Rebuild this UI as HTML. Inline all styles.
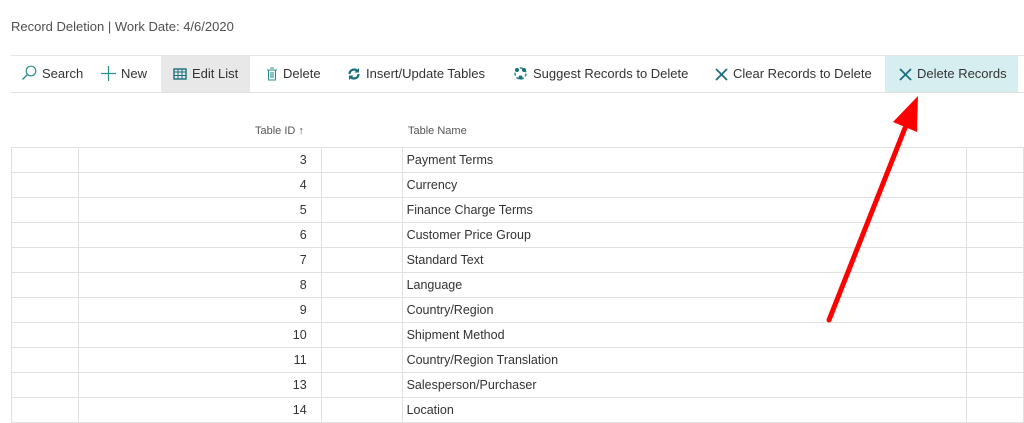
<!DOCTYPE html>
<html><head><style>
body{margin:0;width:1024px;height:407px;overflow:hidden;background:#fff;font-family:"Liberation Sans",sans-serif;position:relative;color:#333}
.t{position:absolute;left:11px;top:19px;font-size:13px;color:#505050}
.bar{position:absolute;left:11px;top:55px;width:1013px;height:36px;border-top:1px solid #e6e6e6;border-bottom:1px solid #e1e1e1}
.b{position:absolute;top:0;height:36px;line-height:36px;font-size:13px;color:#333;white-space:nowrap}
.b svg{vertical-align:-3px;margin-right:5px}
.hd{position:absolute;top:125px;font-size:11px;color:#555}
table{position:absolute;left:11px;top:147px;border-collapse:collapse;font-size:12.5px;color:#333}
td{border:1px solid #e1e1e1;height:24px;padding:0 4px}
td.n{text-align:right;padding-right:14px}
</style></head><body>
<div class="t">Record Deletion | Work Date: 4/6/2020</div>
<div class="bar">
<div class="b" style="left:150px;width:89px;background:#e8e8e8"></div>
<div class="b" style="left:874px;width:133px;background:#d7eef1"></div>
<div class="b" style="left:10px"><svg width="16" height="16" viewBox="0 0 16 16"><circle cx="10" cy="6" r="4.8" fill="none" stroke="#2a8f8f" stroke-width="1.2"/><path d="M6.5 9.5L1.5 14.5" stroke="#2a8f8f" stroke-width="1.4"/></svg>Search</div>
<div class="b" style="left:90px"><svg width="15" height="15"><path d="M7.5 0v15M0 7.5h15" stroke="#2a8f8f" stroke-width="1.2"/></svg>New</div>
<div class="b" style="left:162px"><svg width="14" height="14"><rect x="1" y="2" width="12" height="10" fill="none" stroke="#1b6f7d" stroke-width="1.4"/><path d="M1 5h12M1 8.5h12M5 2v10M9 2v10" stroke="#1b6f7d"/></svg>Edit List</div>
<div class="b" style="left:255px"><svg width="12" height="14"><path d="M1 3h10M4 1h4M2.5 3v10h7V3M5 5v6M7 5v6" fill="none" stroke="#2a8f8f" stroke-width="1.1"/></svg>Delete</div>
<div class="b" style="left:336px"><svg width="14" height="14"><path d="M2.5 7a4.5 4.5 0 0 1 8-2.8M11.5 7a4.5 4.5 0 0 1-8 2.8" fill="none" stroke="#1b6f7d" stroke-width="2.2"/><path d="M12 1v4.5H7.5zM2 13V8.5h4.5z" fill="#1b6f7d"/></svg>Insert/Update Tables</div>
<div class="b" style="left:502px"><svg width="15" height="15"><circle cx="7.5" cy="7.5" r="5.5" fill="none" stroke="#2a8f8f" stroke-width="1.5" stroke-dasharray="3 2"/><circle cx="4" cy="4" r="2" fill="#1b6f7d"/><circle cx="11" cy="4" r="2" fill="#1b6f7d"/><circle cx="7.5" cy="11.5" r="2" fill="#1b6f7d"/></svg>Suggest Records to Delete</div>
<div class="b" style="left:704px"><svg width="13" height="13"><path d="M1 1l11 11M12 1L1 12" stroke="#1b6f7d" stroke-width="1.8"/></svg>Clear Records to Delete</div>
<div class="b" style="left:888px"><svg width="13" height="13"><path d="M1 1l11 11M12 1L1 12" stroke="#1b6f7d" stroke-width="1.8"/></svg>Delete Records</div>
</div>
<div class="hd" style="left:255px">Table ID ↑</div>
<div class="hd" style="left:408px">Table Name</div>
<table>
<colgroup><col style="width:67px"><col style="width:243px"><col style="width:81px"><col style="width:565px"><col style="width:57px"></colgroup>
<tr><td></td><td class="n">3</td><td></td><td>Payment Terms</td><td></td></tr>
<tr><td></td><td class="n">4</td><td></td><td>Currency</td><td></td></tr>
<tr><td></td><td class="n">5</td><td></td><td>Finance Charge Terms</td><td></td></tr>
<tr><td></td><td class="n">6</td><td></td><td>Customer Price Group</td><td></td></tr>
<tr><td></td><td class="n">7</td><td></td><td>Standard Text</td><td></td></tr>
<tr><td></td><td class="n">8</td><td></td><td>Language</td><td></td></tr>
<tr><td></td><td class="n">9</td><td></td><td>Country/Region</td><td></td></tr>
<tr><td></td><td class="n">10</td><td></td><td>Shipment Method</td><td></td></tr>
<tr><td></td><td class="n">11</td><td></td><td>Country/Region Translation</td><td></td></tr>
<tr><td></td><td class="n">13</td><td></td><td>Salesperson/Purchaser</td><td></td></tr>
<tr><td></td><td class="n">14</td><td></td><td>Location</td><td></td></tr>
</table>
<svg style="position:absolute;left:0;top:0" width="1024" height="407"><line x1="829" y1="320" x2="905" y2="128" stroke="#f00" stroke-width="5" stroke-linecap="round"/><polygon points="918,96 893,122 917,132" fill="#f00"/></svg>
</body></html>
